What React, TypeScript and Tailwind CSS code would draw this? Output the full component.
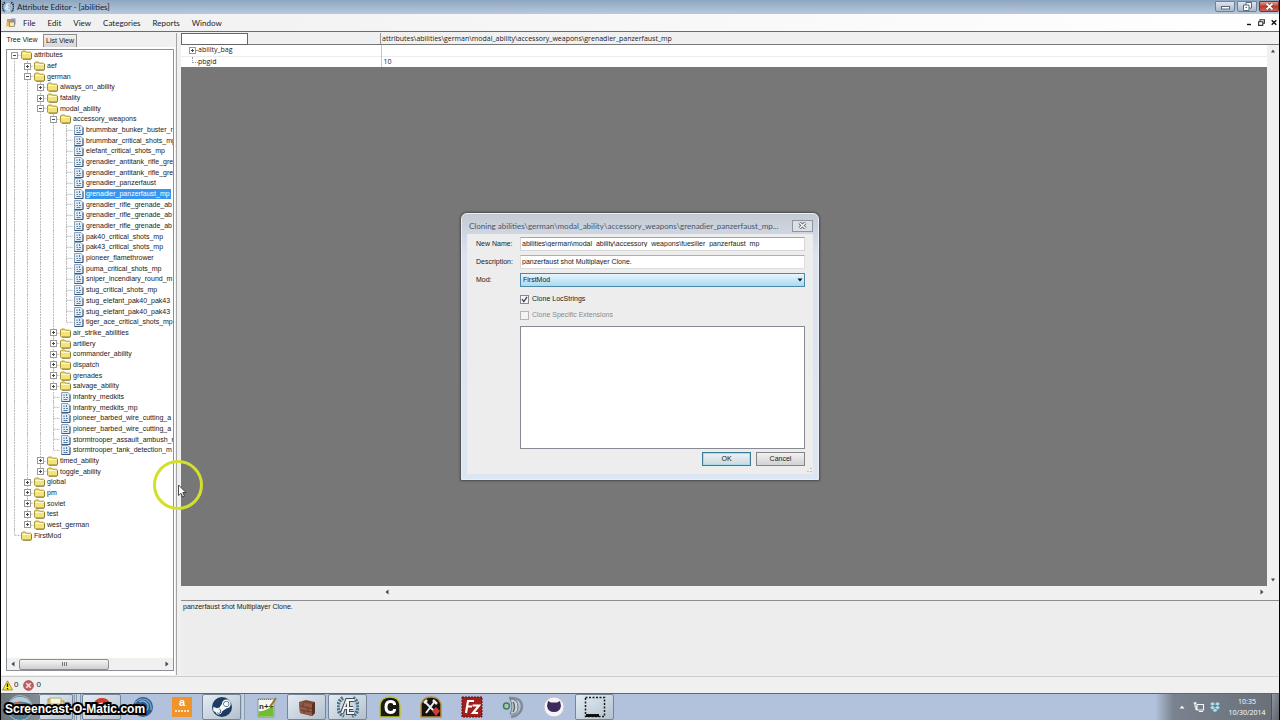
import React, { useState } from 'react';
import { FaSteamSymbol } from 'react-icons/fa';

interface TreeItem {
  depth: number;
  label: string;
  kind: 'open' | 'closed' | 'file' | 'leaf';
  last?: boolean;
}

const treeItems: TreeItem[] = [
  { depth: 0, label: 'attributes', kind: 'open' },
  { depth: 1, label: 'aef', kind: 'closed' },
  { depth: 1, label: 'german', kind: 'open' },
  { depth: 2, label: 'always_on_ability', kind: 'closed' },
  { depth: 2, label: 'fatality', kind: 'closed' },
  { depth: 2, label: 'modal_ability', kind: 'open' },
  { depth: 3, label: 'accessory_weapons', kind: 'open' },
  { depth: 4, label: 'brummbar_bunker_buster_r', kind: 'file' },
  { depth: 4, label: 'brummbar_critical_shots_mp', kind: 'file' },
  { depth: 4, label: 'elefant_critical_shots_mp', kind: 'file' },
  { depth: 4, label: 'grenadier_antitank_rifle_gre', kind: 'file' },
  { depth: 4, label: 'grenadier_antitank_rifle_gre', kind: 'file' },
  { depth: 4, label: 'grenadier_panzerfaust', kind: 'file' },
  { depth: 4, label: 'grenadier_panzerfaust_mp', kind: 'file' },
  { depth: 4, label: 'grenadier_rifle_grenade_ab', kind: 'file' },
  { depth: 4, label: 'grenadier_rifle_grenade_ab', kind: 'file' },
  { depth: 4, label: 'grenadier_rifle_grenade_ab', kind: 'file' },
  { depth: 4, label: 'pak40_critical_shots_mp', kind: 'file' },
  { depth: 4, label: 'pak43_critical_shots_mp', kind: 'file' },
  { depth: 4, label: 'pioneer_flamethrower', kind: 'file' },
  { depth: 4, label: 'puma_critical_shots_mp', kind: 'file' },
  { depth: 4, label: 'sniper_incendiary_round_m', kind: 'file' },
  { depth: 4, label: 'stug_critical_shots_mp', kind: 'file' },
  { depth: 4, label: 'stug_elefant_pak40_pak43', kind: 'file' },
  { depth: 4, label: 'stug_elefant_pak40_pak43', kind: 'file' },
  { depth: 4, label: 'tiger_ace_critical_shots_mp', kind: 'file', last: true },
  { depth: 3, label: 'air_strike_abilities', kind: 'closed' },
  { depth: 3, label: 'artillery', kind: 'closed' },
  { depth: 3, label: 'commander_ability', kind: 'closed' },
  { depth: 3, label: 'dispatch', kind: 'closed' },
  { depth: 3, label: 'grenades', kind: 'closed' },
  { depth: 3, label: 'salvage_ability', kind: 'closed' },
  { depth: 3, label: 'infantry_medkits', kind: 'file' },
  { depth: 3, label: 'infantry_medkits_mp', kind: 'file' },
  { depth: 3, label: 'pioneer_barbed_wire_cutting_a', kind: 'file' },
  { depth: 3, label: 'pioneer_barbed_wire_cutting_a', kind: 'file' },
  { depth: 3, label: 'stormtrooper_assault_ambush_r', kind: 'file' },
  { depth: 3, label: 'stormtrooper_tank_detection_m', kind: 'file', last: true },
  { depth: 2, label: 'timed_ability', kind: 'closed' },
  { depth: 2, label: 'toggle_ability', kind: 'closed', last: true },
  { depth: 1, label: 'global', kind: 'closed' },
  { depth: 1, label: 'pm', kind: 'closed' },
  { depth: 1, label: 'soviet', kind: 'closed' },
  { depth: 1, label: 'test', kind: 'closed' },
  { depth: 1, label: 'west_german', kind: 'closed', last: true },
  { depth: 0, label: 'FirstMod', kind: 'leaf', last: true },
];

const menus = ['File', 'Edit', 'View', 'Categories', 'Reports', 'Window'];

function FolderIcon() {
  return (
    <svg className="h-[10px] w-[11px] shrink-0" viewBox="0 0 11 10">
      <path d="M.5 8V2L1.5 1H4.5L5.5 2.2H9.5L10.5 3V8L9.5 9H1.5Z" fill="#f3e37c" stroke="#a38c2c" strokeWidth=".9" />
      <path d="M1.5 3.5H9.3" stroke="#fffbd0" strokeWidth="1" />
      <path d="M2 9.3H10L10.7 8.5V3.5" fill="none" stroke="#7d6b22" strokeWidth=".7" />
    </svg>
  );
}

function FileIcon() {
  return (
    <svg className="h-[10px] w-[11px] shrink-0" viewBox="0 0 11 10">
      <path d="M1.5 .5H8L10 2.5V9.5H1.5Z" fill="#e3edf7" stroke="#8198b0" strokeWidth=".9" />
      <path d="M10 2.5V9.5H1.5" fill="none" stroke="#3d5c7e" strokeWidth="1" />
      <path d="M4 2.5V4M6.5 2V4M3.5 5.5H5M6 5.5H8M3.5 7.5H7.5" stroke="#5b7ea6" strokeWidth="1.1" />
    </svg>
  );
}

function Expander({ open }: { open: boolean }) {
  return (
    <svg className="block h-[7px] w-[7px]" viewBox="0 0 7 7" shapeRendering="crispEdges">
      <rect x=".5" y=".5" width="6" height="6" fill="#fff" stroke="#9a9a9a" />
      <path d={open ? 'M2 3.5H5' : 'M2 3.5H5M3.5 2V5'} stroke="#4a4a4a" />
    </svg>
  );
}

// Dotted vertical and horizontal connectors of one tree column
function Guide({ first, last, branch }: { first?: boolean; last?: boolean; branch?: boolean }) {
  return (
    <svg className="h-full w-[13px] shrink-0" viewBox="0 0 13 12" preserveAspectRatio="none">
      <path
        d={`M6.5 ${first ? 6 : 0}V${last ? 6 : 12}${branch ? 'M6.5 6H13' : ''}`}
        fill="none"
        stroke="#b4b4b4"
        strokeDasharray="2 1"
      />
    </svg>
  );
}

function TreeRow({ item, index, selected, onSelect }: { item: TreeItem; index: number; selected: boolean; onSelect: () => void }) {
  const isFolder = item.kind !== 'file';
  return (
    <li role="treeitem" aria-selected={selected} aria-level={item.depth + 1} className="flex min-h-0 items-center" onClick={onSelect}>
      {Array.from({ length: item.depth }, (_, i) => (
        <Guide key={i} />
      ))}
      <span className="relative h-full w-[13px] shrink-0">
        <span className="block h-full">
          <Guide branch first={index === 0} last={item.last} />
        </span>
        {(item.kind === 'open' || item.kind === 'closed') && (
          <button aria-label={`Toggle ${item.label}`} className="absolute inset-0 flex items-center justify-center">
            <Expander open={item.kind === 'open'} />
          </button>
        )}
      </span>
      {isFolder ? <FolderIcon /> : <FileIcon />}
      <span className={`ml-px h-[10px] px-px leading-[10px] whitespace-nowrap ${selected ? 'bg-[#3595f0] text-white' : ''}`}>
        {item.label}
      </span>
    </li>
  );
}

function Arrow({ d }: { d: string }) {
  return (
    <svg className="h-[6px] w-[6px]" viewBox="0 0 6 6">
      <path d={d} fill="#444" />
    </svg>
  );
}

function TitleBar() {
  return (
    <header className="flex h-[14px] items-start bg-linear-to-b from-[#8ea6c1] to-[#b9c9dc] pl-px">
      <svg className="mt-px h-3 w-3" viewBox="0 0 12 12">
        <path d="M3 1.5A5 5 0 0 0 3 10.5M9 1.5A5 5 0 0 1 9 10.5" fill="none" stroke="#24435c" strokeWidth="2" strokeDasharray="1.5 .6" />
        <path d="M5 9V3H8M5 6H7.5M5 9H8M5 3L3.5 8" fill="none" stroke="#e9f1f6" strokeWidth="1.2" />
      </svg>
      <h1 className="ml-[3px] text-[8px] leading-[14px] text-[#16202c]">Attribute Editor - [abilities]</h1>
      <div className="ml-auto flex gap-[2px] pt-px">
        <button aria-label="Minimize" className="flex h-[11px] w-5 items-center justify-center rounded-b-xs border border-[#6e8299] bg-linear-to-b from-[#dce5ee] to-[#a9b9cb]">
          <svg className="h-[7px] w-[9px]" viewBox="0 0 9 7"><rect x=".5" y="3.5" width="8" height="2.5" fill="#fff" stroke="#5a6878" /></svg>
        </button>
        <button aria-label="Restore" className="flex h-[11px] w-5 items-center justify-center rounded-b-xs border border-[#6e8299] bg-linear-to-b from-[#dce5ee] to-[#a9b9cb]">
          <svg className="h-[9px] w-[9px]" viewBox="0 0 9 9"><path d="M3 3V.5H8.5V6H6M.5 3H6V8.5H.5ZM2.5 5.5H4" fill="#fff" stroke="#5a6878" /></svg>
        </button>
        <button aria-label="Close" className="flex h-[11px] w-5 items-center justify-center rounded-b-xs border border-[#7e2f2a] bg-linear-to-b from-[#dd9c90] via-[#b9392c] to-[#c9685a]">
          <svg className="h-[7px] w-[9px]" viewBox="0 0 9 7"><path d="M1.5 .5L7.5 6.5M7.5 .5L1.5 6.5" stroke="#6a3a36" strokeWidth="3" /><path d="M1.5 .5L7.5 6.5M7.5 .5L1.5 6.5" stroke="#fff" strokeWidth="1.8" /></svg>
        </button>
      </div>
    </header>
  );
}

function MenuBar() {
  return (
    <nav className="flex h-[18px] items-center border-b border-[#6c6c6c] bg-linear-to-r from-[#f0f0f0] to-white pl-[5px]">
      <svg className="mr-px h-[10px] w-[10px]" viewBox="0 0 10 10">
        <rect x="1" y="1" width="4" height="3.5" fill="#d98a5a" />
        <rect x="5" y=".5" width="4.5" height="6" fill="#8a93b5" />
        <rect x=".5" y="4.5" width="4.5" height="4" fill="#e5b84e" />
        <path d="M3.5 4H8.5V8.5H3.5Z" fill="#f7e9a6" stroke="#79776a" strokeWidth=".7" />
      </svg>
      {menus.map((menu) => (
        <button key={menu} className="px-[6px] text-[8px] leading-4 text-[#1c1c1c]">
          {menu}
        </button>
      ))}
      <div className="ml-auto flex items-center gap-[6px] pr-[2px]">
        <button aria-label="Minimize document"><svg className="h-[7px] w-[6px]" viewBox="0 0 6 7"><path d="M1 5.5H5" stroke="#111" strokeWidth="1.4" /></svg></button>
        <button aria-label="Restore document"><svg className="h-[7px] w-[7px]" viewBox="0 0 7 7"><path d="M2 2.5V.8H6.4V4.2H5M.6 2.8H4.8V6.4H.6Z" fill="none" stroke="#333" strokeWidth="1.1" /></svg></button>
        <button aria-label="Close document"><svg className="h-[7px] w-[6px]" viewBox="0 0 6 7"><path d="M.7 1.2L5.3 5.8M5.3 1.2L.7 5.8" stroke="#111" strokeWidth="1.4" /></svg></button>
      </div>
    </nav>
  );
}

function TreePanel() {
  const [selected, setSelected] = useState(13);

  return (
    <aside className="flex w-[176px] shrink-0 flex-col border-r border-[#a5a5a5] pr-px">
      <div role="tablist" className="flex h-[14px] items-end leading-3">
        <button role="tab" aria-selected="true" className="h-[14px] w-[42px] bg-white text-center">Tree View</button>
        <button role="tab" aria-selected="false" className="h-[13px] w-[34px] border border-b-0 border-[#8e8e8e] bg-linear-to-b from-[#f1f1f1] to-[#d6d6d6] text-center">List View</button>
      </div>
      <div className="flex flex-1 flex-col bg-white pt-[2px] pr-px pb-1 pl-[5px]">
        <div className="flex flex-1 flex-col overflow-hidden border border-[#8b8f96]">
          <ul role="tree" className="grid h-[491px] auto-rows-fr overflow-hidden pl-px">
            {treeItems.map((item, index) => (
              <TreeRow key={index} item={item} index={index} selected={index === selected} onSelect={() => setSelected(index)} />
            ))}
          </ul>
          <div className="mt-auto flex h-3 items-center bg-[#f0f0f0]">
            <button aria-label="Scroll left" className="flex w-3 justify-center"><Arrow d="M4.5 .5V5.5L1.5 3Z" /></button>
            <div className="flex h-[11px] w-[90px] items-center justify-center gap-px rounded-xs border border-[#8e8e8e] bg-linear-to-b from-[#f5f5f5] to-[#cfcfcf]">
              <span className="h-1 w-px bg-[#777]" />
              <span className="h-1 w-px bg-[#777]" />
              <span className="h-1 w-px bg-[#777]" />
            </div>
            <button aria-label="Scroll right" className="ml-auto flex w-3 justify-center"><Arrow d="M1.5 .5V5.5L4.5 3Z" /></button>
          </div>
        </div>
      </div>
    </aside>
  );
}

function PropertyPanel() {
  return (
    <main className="flex min-w-0 flex-1 flex-col">
      <div className="flex h-3 items-center border-b border-[#777] bg-[#f0f0f0]">
        <div className="h-full w-[200px] border-r border-[#999]">
          <input aria-label="Filter" className="block h-3 w-[67px] border border-[#666] bg-white px-px text-[7px]" />
        </div>
        <span className="pl-px font-[Open_Sans,sans-serif]">
          attributes\abilities\german\modal_ability\accessory_weapons\grenadier_panzerfaust_mp
        </span>
      </div>
      <div className="flex flex-1">
        <div className="flex-1 bg-[#777777]">
          <table className="w-full table-fixed border-collapse bg-white font-[Open_Sans,sans-serif]">
            <colgroup>
              <col className="w-[200px]" />
              <col />
            </colgroup>
            <tbody>
              <tr className="h-[11px] border-b border-[#ececec]">
                <td className="border-r border-[#c8c8c8] p-0">
                  <div className="flex items-center pl-2">
                    <button aria-label="Toggle ability_bag"><Expander open={false} /></button>
                    <span className="h-px w-[2px] bg-[#999]" />
                    <span>ability_bag</span>
                  </div>
                </td>
                <td className="p-0" />
              </tr>
              <tr className="h-[11px]">
                <td className="border-r border-[#c8c8c8] p-0">
                  <div className="flex items-center pl-[11px]">
                    <span className="mb-1 h-[6px] w-[6px] border-b border-l border-dotted border-[#999]" />
                    <span>pbgid</span>
                  </div>
                </td>
                <td className="p-0 pl-[2px]">10</td>
              </tr>
            </tbody>
          </table>
        </div>
        <div className="flex w-3 flex-col items-center justify-between bg-[#f0f0f0] py-[3px]">
          <button aria-label="Scroll up"><Arrow d="M1 4.5H5L3 1.5Z" /></button>
          <button aria-label="Scroll down"><Arrow d="M1 1.5H5L3 4.5Z" /></button>
        </div>
      </div>
      <div className="flex h-[15px] items-start justify-between border-b border-[#8c8c8c] bg-[#f0f0f0] pt-[3px] pr-[14px] pl-[203px]">
        <button aria-label="Scroll grid left"><Arrow d="M4.5 .5V5.5L1.5 3Z" /></button>
        <button aria-label="Scroll grid right"><Arrow d="M1.5 .5V5.5L4.5 3Z" /></button>
      </div>
      <p className="h-[74px] bg-[#ededed] pt-px pl-[2px]">panzerfaust shot Multiplayer Clone.</p>
    </main>
  );
}

function StatusBar() {
  return (
    <footer className="flex h-[17px] items-center border-t border-[#cccccc] bg-[#f0f0f0] pl-px">
      <svg className="h-[11px] w-[11px]" viewBox="0 0 11 11">
        <path d="M5.5 .8L10.5 10H.5Z" fill="#f4e92c" stroke="#8f8418" strokeWidth=".8" strokeLinejoin="round" />
        <path d="M5.5 3.5V7M5.5 8V9.2" stroke="#222" strokeWidth="1.3" />
      </svg>
      <span className="ml-px text-[8px]">0</span>
      <svg className="ml-[5px] h-[11px] w-[11px]" viewBox="0 0 11 11">
        <circle cx="5.5" cy="5.5" r="4.8" fill="#cf5b62" stroke="#8e5257" />
        <path d="M3.3 3.3L7.7 7.7M7.7 3.3L3.3 7.7" stroke="#f7e2e2" strokeWidth="1.6" />
      </svg>
      <span className="ml-[2px] text-[8px]">0</span>
    </footer>
  );
}

function CloneDialog() {
  const [cloneLoc, setCloneLoc] = useState(true);

  return (
    <div className="absolute inset-0 flex items-center justify-center">
      <form
        role="dialog"
        aria-labelledby="clone-title"
        onSubmit={(e) => e.preventDefault()}
        className="flex h-[267px] w-[358px] flex-col rounded-t-md border border-[#e9eff6] bg-linear-to-b from-[#c3cad4] via-[#dce3ee] via-15% to-[#dde6f3] px-[5px] pb-[5px] shadow-[0_0_2px_1px_#4b4b4b]"
      >
        <div className="flex h-5 shrink-0 items-center pt-[3px] pl-[2px]">
          <h2 id="clone-title" className="font-[Lato,sans-serif] text-[8px] whitespace-nowrap text-[#46566a]">
            Cloning abilities\german\modal_ability\accessory_weapons\grenadier_panzerfaust_mp...
          </h2>
          <button type="button" aria-label="Close" className="ml-auto flex h-3 w-[21px] items-center justify-center border border-[#8e959e] bg-[#dcdfe3]">
            <svg className="h-[7px] w-[9px]" viewBox="0 0 9 7">
              <path d="M1.5 .7L7.5 6.3M7.5 .7L1.5 6.3" stroke="#555d67" strokeWidth="3" />
              <path d="M1.5 .7L7.5 6.3M7.5 .7L1.5 6.3" stroke="#fff" strokeWidth="1.4" />
            </svg>
          </button>
        </div>
        <div className="relative flex flex-1 flex-col bg-[#ededed] pt-[3px] pr-2 pb-2 pl-[9px]">
          <div className="grid flex-1 grid-cols-[44px_1fr] grid-rows-[14px_14px_14px_10px_10px_1fr] items-center gap-y-1">
            <label htmlFor="new-name">New Name:</label>
            <input id="new-name" defaultValue="abilities\german\modal_ability\accessory_weapons\fuesilier_panzerfaust_mp" className="h-[14px] min-w-0 border border-[#d5d5d5] border-t-[#a5a5a5] bg-white px-px pb-px leading-[11px]" />
            <label htmlFor="description">Description:</label>
            <input id="description" defaultValue="panzerfaust shot Multiplayer Clone." className="h-[14px] min-w-0 border border-[#dedede] border-t-[#b0b0b0] bg-white px-px pb-px leading-[11px]" />
            <label htmlFor="mod">Mod:</label>
            <div className="relative">
              <select id="mod" className="block h-[14px] w-full appearance-none border border-[#4d8aa8] bg-linear-to-b from-[#e9f6fd] to-[#a9d9f2] px-[2px] leading-3">
                <option>FirstMod</option>
              </select>
              <svg className="pointer-events-none absolute top-[5px] right-[2px] h-1 w-[6px]" viewBox="0 0 6 4">
                <path d="M.5 .5H5.5L3 3.5Z" fill="#111" />
              </svg>
            </div>
            <label className="col-start-2 mt-[6px] flex items-center">
              <span className="relative mr-[3px] h-[9px] w-[9px]">
                <input type="checkbox" checked={cloneLoc} onChange={() => setCloneLoc(!cloneLoc)} className="block h-[9px] w-[9px] appearance-none border border-[#8a8a8a] bg-[#f7f7f7]" />
                {cloneLoc && (
                  <svg className="pointer-events-none absolute inset-0" viewBox="0 0 9 9">
                    <path d="M2 4.2L3.8 6.6L7 1.8" fill="none" stroke="#41465e" strokeWidth="1.4" />
                  </svg>
                )}
              </span>
              Clone LocStrings
            </label>
            <label className="col-start-2 mt-[10px] flex items-center text-[#8a8a8a]">
              <input type="checkbox" disabled className="mr-[3px] h-[9px] w-[9px] appearance-none border border-[#b5b5b5] bg-[#f4f4f4]" />
              Clone Specific Extensions
            </label>
            <select multiple aria-label="Extensions" className="col-start-2 mb-px h-[123px] self-end appearance-none border border-[#868b93] bg-white" />
          </div>
          <div className="mt-[2px] flex justify-end gap-[5px]">
            <button type="submit" className="h-[14px] w-[49px] border border-[#3a7a96] bg-linear-to-b from-[#eef4f6] to-[#cbd9de] leading-3 shadow-[inset_0_0_0_1px_#a6dbea]">OK</button>
            <button type="button" className="h-[14px] w-[49px] border border-[#858585] bg-linear-to-b from-[#f2f2f2] to-[#d2d2d2] leading-3">Cancel</button>
          </div>
          <svg className="absolute right-0 bottom-0 h-2 w-2" viewBox="0 0 8 8">
            <path d="M6 2V3M6 5V6M3 5V6" stroke="#aaa" strokeWidth="1.3" />
          </svg>
        </div>
      </form>
    </div>
  );
}

function TaskButton({ label, active, narrow, children }: { label: string; active?: boolean; narrow?: boolean; children: React.ReactNode }) {
  return (
    <button
      aria-label={label}
      className={`flex h-[26px] items-center justify-center ${narrow ? 'w-[34px]' : 'w-[39px]'} ${active ? 'rounded-xs border border-[#75869b] bg-linear-to-br from-[#e4ecf3] to-[#b3c1ce]' : ''}`}
    >
      <svg className="h-[22px] w-[22px]" viewBox="0 0 22 22">{children}</svg>
    </button>
  );
}

function TaskBar() {
  return (
    <div className="flex h-[27px] items-center border-t border-[#5d6772] bg-[#b2c2dc]">
      <button aria-label="Start" className="flex h-[26px] w-[38px] items-center justify-center bg-linear-to-r from-[#6b737d] to-[#838b95]">
        <svg className="h-[26px] w-[26px]" viewBox="0 0 26 26">
          <circle cx="13" cy="14" r="12.5" fill="#527e94" stroke="#a9bbc5" />
          <path d="M2 10A12 12 0 0 1 24 10Q13 5 2 10" fill="#b9cad2" />
          <path d="M7 9Q10 7 12.5 9V13Q10 11.5 6.5 13Z" fill="#e0673d" />
          <path d="M13.5 9Q16 11 19 9L20 13Q16 15 13.5 13Z" fill="#93b84a" />
          <path d="M6 14Q9 12.5 12.5 14V19Q9 17 5.5 19Z" fill="#58aede" />
          <path d="M13.5 14Q16 16 20 14V18Q16 21 13.5 19Z" fill="#edc44a" />
        </svg>
      </button>
      <TaskButton label="Explorer" active narrow>
        <path d="M3 3H9L11 5H19V18H3Z" fill="#e7d07b" stroke="#a9924b" />
        <path d="M5 2H16V8H5Z" fill="#f6f4da" stroke="#b3a86e" />
        <path d="M3 9H20V18H3Z" fill="#f3e39f" />
      </TaskButton>
      <span className="mx-px flex h-[26px] w-[7px] border-x border-[#8b9bb0] bg-[#c6d2df] px-px">
        <span className="w-full border-l border-[#8b9bb0]" />
      </span>
      <div className="flex gap-px">
        <TaskButton label="Chrome" active>
          <circle cx="11" cy="11" r="9" fill="#e7bd31" />
          <path d="M3 7A9 9 0 0 1 19.5 8H11L7 13Z" fill="#cf3b35" />
          <path d="M3 7A9 9 0 0 0 10 20L14 13H7Z" fill="#4a9b4e" />
          <circle cx="11" cy="11" r="4" fill="#4d89cc" stroke="#fff" />
        </TaskButton>
        <TaskButton label="Thunderbird">
          <circle cx="12" cy="11" r="10" fill="#2e5b8c" />
          <path d="M4 7Q9 1 16 4Q21 8 20 14M8 6Q14 3 17 9Q18 14 12 16" fill="none" stroke="#84aed0" strokeWidth="1.2" />
          <path d="M6 11Q7 8 11 8Q15 9 14 13Q12 16 8 15Z" fill="#b9cede" />
          <path d="M7 11L11 13L14 10" fill="none" stroke="#4f7598" />
        </TaskButton>
        <TaskButton label="Amazon">
          <rect x="1" y="1" width="20" height="20" fill="#f0932a" />
          <text x="11" y="10" textAnchor="middle" fontSize="11" fontWeight="700" fill="#fff">a</text>
          <path d="M4 15H18" fill="none" stroke="#ffe6c2" strokeWidth="2" strokeDasharray="2 1" />
        </TaskButton>
        <TaskButton label="Steam" active>
          <circle cx="11" cy="11" r="10" fill="#1c3d5f" />
          <FaSteamSymbol x="1" y="1" size={20} color="#f4f7fa" />
        </TaskButton>
      </div>
      <span className="mx-px h-[26px] w-[3px] border-r border-[#8b9bb0] bg-[#c6d2df]" />
      <div className="flex gap-[2px]">
        <TaskButton label="Notepad++">
          <path d="M3 3H19V21H3Z" fill="#f7f8f2" stroke="#8a958a" />
          <path d="M3.5 15Q10 16 18.5 9V20.5H3.5Z" fill="#71bd2f" />
          <text x="4" y="13" fontSize="8" fontWeight="700" fill="#24331e">n++</text>
          <path d="M3 3.5H17" stroke="#777" strokeDasharray="1 1" />
          <path d="M21 2L15 11" stroke="#9e7630" strokeWidth="2" />
        </TaskButton>
        <TaskButton label="Brick" active>
          <path d="M3 6L10 4L19 6V17L16 20L4 17Z" fill="#7d4937" />
          <path d="M3 6L16 8V20L4 17Z" fill="#935a45" />
          <path d="M16 8L19 6V17L16 20Z" fill="#5a3025" />
          <path d="M4 10L16 12.5M4 14L16 16M7 7V10.5M12 12V15M8 15V18" stroke="#6a3c2e" strokeWidth="1" />
        </TaskButton>
        <TaskButton label="Attribute Editor" active>
          <path d="M6 2A10 10 0 0 0 7 20M16 2A10 10 0 0 1 15 20" fill="none" stroke="#477084" strokeWidth="4" strokeDasharray="2 1" />
          <path d="M5 17L10 4H17M11 4V17H17M7 12H16" fill="none" stroke="#3c4b55" strokeWidth="4" />
          <path d="M5 17L10 4H17M11 4V17H17M7 12H16" fill="none" stroke="#f1f2ee" strokeWidth="2" />
        </TaskButton>
      </div>
      <div className="ml-[3px] flex gap-[2px]">
        <TaskButton label="Company launcher">
          <path d="M1 21V9Q2 1 11 1T21 9V21Z" fill="#1a1a13" stroke="#c3c52d" strokeWidth="1.5" />
          <path d="M15.5 9V8Q15 5.5 11.5 5.5Q7 5.5 7 11T11.5 16.5Q15 16.5 15.5 14V13" fill="none" stroke="#fff" strokeWidth="3" />
        </TaskButton>
        <TaskButton label="Tools">
          <path d="M1 21V8Q3 1 11 1T21 8V21Z" fill="#151310" stroke="#b98e37" strokeWidth="1.5" />
          <path d="M5 6L15 16M15 5L6 17" stroke="#eee" strokeWidth="2" />
          <path d="M4 7L7 4M13 4L17 8" stroke="#eee" strokeWidth="2.5" />
          <path d="M16 11L20 15L16 20L12 15Z" fill="#d43a35" />
        </TaskButton>
        <TaskButton label="FileZilla">
          <rect x="1" y="1" width="20" height="20" fill="#a31f1c" stroke="#5d1210" strokeDasharray="2 1" />
          <path d="M5 17L7 5H13M6.5 10.5H11M11.5 9.5H18L12 17H17" fill="none" stroke="#fff" strokeWidth="2.2" />
        </TaskButton>
        <TaskButton label="TeamSpeak">
          <path d="M7 2Q20 1 20 11Q19 19 9 21" fill="none" stroke="#7f8b96" strokeWidth="2.5" />
          <path d="M8 3Q16 3 16 11T8 18Q12 11 8 3" fill="#cfd6dc" stroke="#6d7984" />
          <path d="M11 6Q14 11 11 16" fill="none" stroke="#5f6972" strokeWidth="1.5" />
          <circle cx="4.5" cy="10" r="3" fill="#a9c7b8" stroke="#3c7b5b" strokeWidth="1.5" />
        </TaskButton>
        <TaskButton label="GitHub">
          <circle cx="11" cy="11" r="10" fill="#f4f3f8" stroke="#c2c2d2" />
          <path d="M5 5L8 6.5H14L17 5L18 10Q17 16 11 16T4 10Z" fill="#3d2a5c" />
        </TaskButton>
        <TaskButton label="Screen recorder" active>
          <path d="M1.5 1.5H20.5V20.5H1.5Z" fill="none" stroke="#1b1b1b" strokeWidth="1.5" strokeDasharray="2 1.5" />
          <path d="M2 19.5H15" stroke="#111" strokeWidth="3" />
        </TaskButton>
      </div>
      <div className="ml-auto flex h-[26px] items-center bg-linear-to-r from-[#b2c2dc] via-[#79828e] via-15% to-[#686f78] pl-6">
        <button aria-label="Show hidden icons" className="mr-2">
          <svg className="h-1 w-[6px]" viewBox="0 0 6 4"><path d="M.5 3.5H5.5L3 .8Z" fill="#fff" /></svg>
        </button>
        <svg className="mr-1 h-3 w-3" viewBox="0 0 12 12">
          <path d="M4 3.5H10.5V9H4ZM6 10.5H10M2 2V5Q2 6 3 6V9" fill="none" stroke="#f3f5f7" strokeWidth="1.2" />
          <path d="M.8 2H3.5" stroke="#fff" strokeWidth="1.5" />
        </svg>
        <svg className="mr-[6px] h-3 w-3" viewBox="0 0 12 12">
          <path d="M3.5 1L6 3L3.5 4.8L1 3ZM8.5 1L11 3L8.5 4.8L6 3ZM3.5 4.8L6 6.8L3.5 8.5L1 6.8ZM8.5 4.8L11 6.8L8.5 8.5L6 6.8ZM6 7.5L8.5 9.5L6 11L3.5 9.5Z" fill="#a5e1f2" />
        </svg>
        <time className="w-10 text-center font-[Open_Sans,sans-serif] text-[7px] leading-[11px] text-white">
          10:35
          <br />
          10/30/2014
        </time>
        <button aria-label="Show desktop" className="ml-1 h-[26px] w-2 border-l border-[#4b525b] bg-linear-to-br from-[#8f969e] to-[#5c636c]" />
      </div>
    </div>
  );
}

export default function App() {
  return (
    <div className="relative flex min-h-screen flex-col overflow-hidden border-x border-black bg-[#f0f0f0] font-['Liberation_Sans',Arial,sans-serif] text-[7px] leading-[10px] text-[#1a1a1a]">
      <div className="relative flex flex-1 flex-col">
        <div className="font-[Lato,sans-serif]">
          <TitleBar />
          <MenuBar />
        </div>
        <div className="flex flex-1 gap-1 pt-px pb-px">
          <TreePanel />
          <PropertyPanel />
        </div>
        <StatusBar />
        <CloneDialog />
      </div>
      <TaskBar />

      {/* Recorder watermark */}
      <p className="pointer-events-none absolute bottom-[3px] left-1 text-[12px] leading-[15px] font-bold text-white [-webkit-text-stroke:4px_#000] [paint-order:stroke_fill]">
        Screencast-O-Matic.com
      </p>

      {/* Highlighted pointer */}
      <svg className="pointer-events-none absolute top-[459px] left-[151px] h-[52px] w-[52px]" viewBox="0 0 52 52">
        <circle cx="26" cy="26" r="23.5" fill="none" stroke="#d3df2d" strokeWidth="3" />
        <path d="M26.5 26V36.5L29 34.3L30.7 38L32.5 37.2L30.8 33.6H34Z" fill="#fff" stroke="#222" strokeWidth=".8" />
      </svg>
    </div>
  );
}
